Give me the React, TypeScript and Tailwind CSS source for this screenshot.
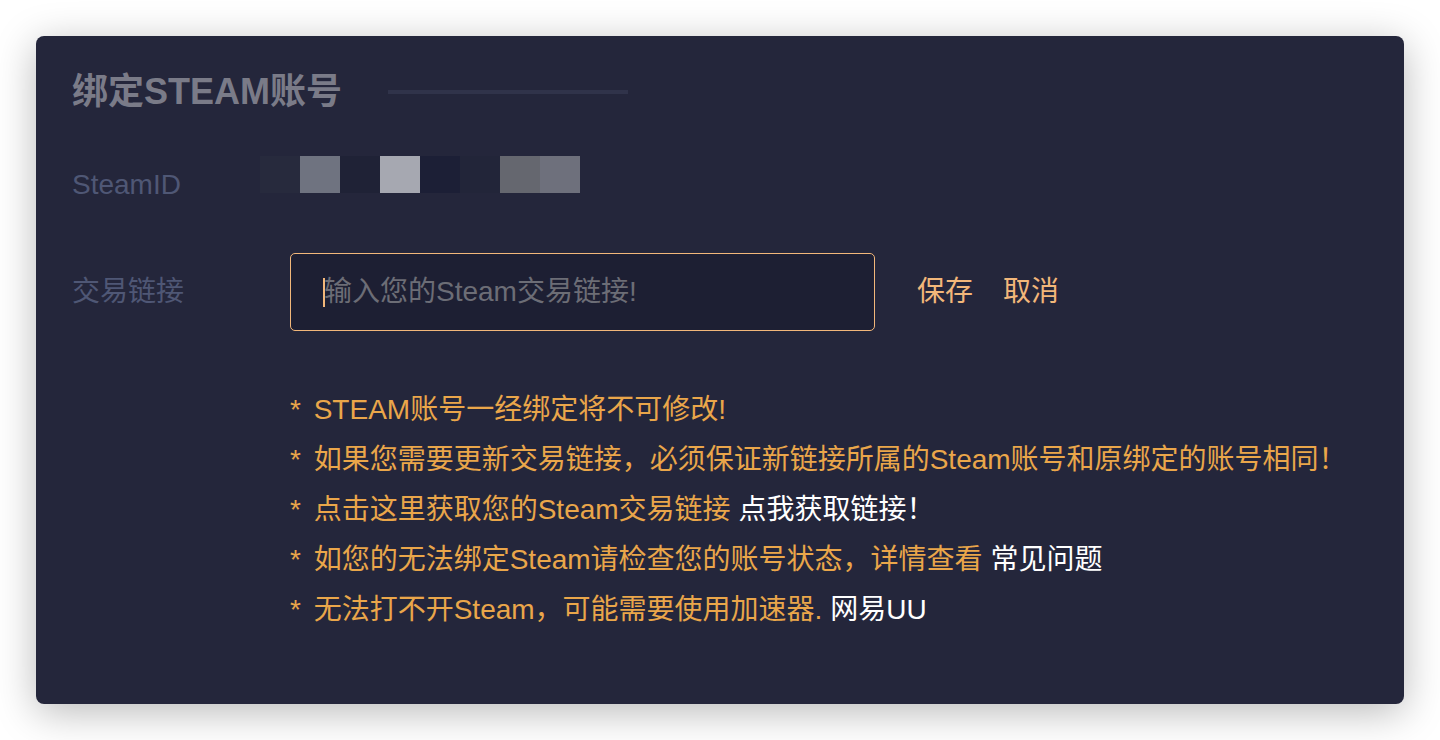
const font = { fontFamily: '"Liberation Sans", "Noto Sans CJK SC", sans-serif' }

const blocks = ["#272a3d", "#6f7380", "#1f2236", "#a6a8b1", "#1c1f36", "#222539", "#65676f", "#6e707c"]

function Star() {
  return <span className="mr-[5px]">* </span>
}

function Tips() {
  return (
    <ul className="ml-[218px] mt-[54px] whitespace-nowrap text-[28px] leading-[50px] text-[#eaa64a]">
      <li>
        <Star />STEAM账号一经绑定将不可修改!
      </li>
      <li>
        <Star />如果您需要更新交易链接，必须保证新链接所属的Steam账号和原绑定的账号相同！
      </li>
      <li>
        <Star />点击这里获取您的Steam交易链接 <a className="text-white">点我获取链接！</a>
      </li>
      <li>
        <Star />如您的无法绑定Steam请检查您的账号状态，详情查看 <a className="text-white">常见问题</a>
      </li>
      <li>
        <Star />无法打不开Steam，可能需要使用加速器. <a className="text-white">网易UU</a>
      </li>
    </ul>
  )
}

export default function App() {
  return (
    <div className="min-h-screen bg-white p-[36px]" style={font}>
      <div className="h-[668px] w-full rounded-lg bg-[#24263b] px-[36px] pt-8 shadow-[0_8px_40px_rgba(0,0,0,0.28)]">
        <div className="flex items-center gap-[46px]">
          <h2 className="text-[36px] font-bold leading-[48px] text-[#7a7b88]">绑定STEAM账号</h2>
          <div className="h-1 w-[240px] bg-[#30334a]" />
        </div>

        <div className="mt-[45px] flex items-start">
          <span className="w-[188px] text-[28px] leading-[48px] text-[#4f5775]">SteamID</span>
          <div className="-mt-[5px] flex blur-[0.6px]">
            {blocks.map((c, i) => (
              <div key={i} className="h-[37px] w-10" style={{ backgroundColor: c }} />
            ))}
          </div>
        </div>

        <div className="mt-[44px] flex items-center">
          <span className="w-[218px] text-[28px] leading-[48px] text-[#4f5775]">交易链接</span>
          <div className="relative h-[78px] w-[585px] rounded-[5px] border-[1.5px] border-[#f2b77a] bg-[#1d1f33]">
            <input
              className="h-full w-full bg-transparent pl-[33px] text-[28px] text-white outline-none placeholder:text-[#6c6d76]"
              placeholder="输入您的Steam交易链接!"
            />
            <div className="absolute left-[32px] top-[24px] h-[29px] w-[2px] bg-[#f2b77a]" />
          </div>
          <button className="ml-[42px] text-[28px] text-[#f2b77a]">保存</button>
          <button className="ml-[30px] text-[28px] text-[#f2b77a]">取消</button>
        </div>

        <Tips />
      </div>
    </div>
  )
}
